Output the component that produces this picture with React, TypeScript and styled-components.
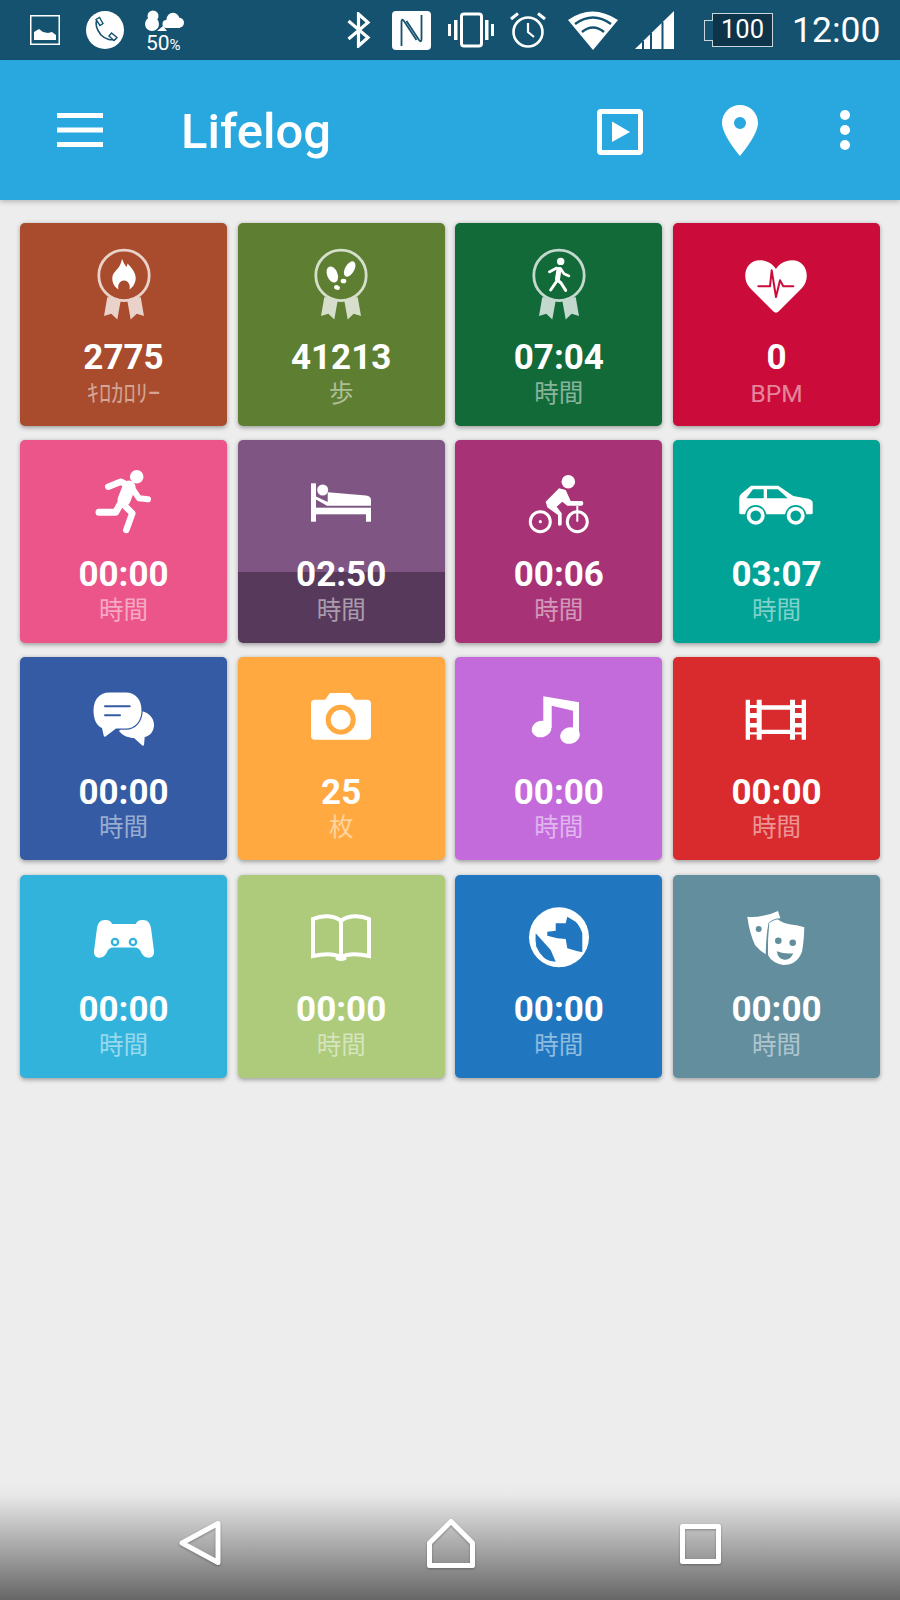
import React from 'react';
import styled, { createGlobalStyle } from 'styled-components';

const Global = createGlobalStyle`
  html, body { margin: 0; padding: 0; background: #ededed; }
  body { font-family: Roboto, "Noto Sans CJK JP", sans-serif; }
`;

const Page = styled.div`
  width: 900px;
  height: 1600px;
  display: flex;
  flex-direction: column;
  overflow: hidden;
  background: #ededed;
`;

const StatusBar = styled.div`
  height: 60px;
  flex: none;
  background: #14526f;
  display: flex;
  align-items: center;
`;

const StatusIcon = styled.svg<{ $ml: number }>`
  flex: none;
  display: block;
  margin-left: ${p => p.$ml}px;
  fill: #fff;
`;

const Stamina = styled.div`
  position: relative;
  flex: none;
  width: 42px;
  height: 60px;
  margin-left: 21px;
`;

const StaminaArt = styled.svg`
  display: block;
  fill: #fff;
`;

const StaminaText = styled.span`
  position: absolute;
  left: 1px;
  top: 32px;
  color: #fff;
  font: 400 21px/22px Roboto, sans-serif;
  white-space: nowrap;
  & small { font-size: 15px; }
`;

const Battery = styled.div`
  position: relative;
  flex: none;
  width: 61px;
  height: 34px;
  box-sizing: border-box;
  margin-left: 38px;
  border: 1.5px solid #c9d6dc;
  background: #0d3449;
  color: #fff;
  font: 400 25.5px/31px Roboto, sans-serif;
  text-align: center;
  &::before {
    content: '';
    position: absolute;
    left: -9px;
    top: 6px;
    width: 7.5px;
    height: 19px;
    border: 1.5px solid #c9d6dc;
    border-right: none;
    background: #14526f;
  }
`;

const Clock = styled.span`
  margin-left: 19px;
  color: #fff;
  font: 400 35.5px/60px Roboto, sans-serif;
  white-space: nowrap;
`;

const AppBar = styled.header`
  position: relative;
  flex: none;
  height: 140px;
  background: #29a8e0;
  box-shadow: 0 2px 5px rgba(0, 0, 0, 0.22);
  display: flex;
  align-items: center;
  padding: 0 50px 0 57px;
  box-sizing: border-box;
`;

const Title = styled.h1`
  margin: 4px 0 0 78px;
  color: #fff;
  font: 500 49px/60px Roboto, sans-serif;
  flex: 1;
`;

const ActionIcon = styled.svg<{ $ml?: number; $mt?: number }>`
  flex: none;
  display: block;
  fill: #fff;
  margin-left: ${p => p.$ml ?? 0}px;
  margin-top: ${p => p.$mt ?? 0}px;
`;

const Grid = styled.main`
  flex: 1;
  display: grid;
  grid-template-columns: repeat(4, 207px);
  grid-auto-rows: 203px;
  gap: 14.33px 10.67px;
  padding: 22.67px 20px 0;
  align-content: start;
`;

const Card = styled.section<{ $bg: string; $band?: string }>`
  border-radius: 5px;
  box-shadow: 0 1.5px 4px rgba(0, 0, 0, 0.32);
  background: ${p => p.$band ? `linear-gradient(${p.$bg} 65%, ${p.$band} 65%)` : p.$bg};
  display: flex;
  flex-direction: column;
  align-items: center;
  padding-top: 16px;
  box-sizing: border-box;
  color: #fff;
`;

const CardIcon = styled.svg`
  display: block;
  flex: none;
  width: 90px;
  height: 90px;
  fill: #fff;
`;

const Value = styled.div`
  margin-top: 9.5px;
  font: 700 35px/40px Roboto, sans-serif;
`;

const Unit = styled.div`
  margin-top: 0.5px;
  font: 400 24.5px/30px Roboto, "Noto Sans CJK JP", sans-serif;
  color: rgba(255, 255, 255, 0.5);
`;

const NavBar = styled.nav`
  flex: none;
  height: 120px;
  box-sizing: border-box;
  padding: 38px 0 0 179px;
  background: linear-gradient(#ededed 0%, #e9e9e9 12%, #666666 100%);
  display: flex;
  align-items: flex-start;
  gap: 205.5px;
`;

const NavIcon = styled.svg`
  display: block;
  flex: none;
  overflow: visible;
  fill: none;
  stroke: #fff;
  stroke-width: 5;
  stroke-linejoin: round;
  filter: drop-shadow(0 1px 1px rgba(0, 0, 0, 0.3));
`;

type IconProps = { bg: string };
const Ribbon = ({ glyph }: { glyph: React.ReactNode }) => (
  <CardIcon viewBox="0 0 90 90">
    <g opacity={0.75}>
      <circle cx={45} cy={36.4} r={25.2} fill="none" stroke="#fff" strokeWidth={2.8} />
      <polygon points="28.3,58 41.7,61.4 38.3,80.4 32.3,74.7 25,77" />
      <polygon points="61.7,58 48.3,61.4 51.7,80.4 57.7,74.7 65,77" />
    </g>
    {glyph}
  </CardIcon>
);

const Fire = () => (
  <Ribbon glyph={<path d="M43 19.7C44.5 24 46 26 47.5 28C48 26.5 48.5 25.5 48.5 24.5C53 29 56.7 34 56.7 39C56.7 45 53 49 50.5 50.4C51.5 47 50 41.5 45 41.5C40 41.5 38.5 47 39.5 50.4C36 48.5 33.3 44.5 33.3 39.5C33.3 33 39 31 41 26C42 24 42.5 22 43 19.7Z" />} />
);
const Steps = () => (
  <Ribbon glyph={<>
    <ellipse cx={36.3} cy={35.5} rx={5.2} ry={8.4} transform="rotate(-22 36.3 35.5)" />
    <ellipse cx={41} cy={48.5} rx={3} ry={2.3} transform="rotate(25 41 48.5)" />
    <ellipse cx={53.7} cy={30} rx={4.6} ry={8.4} transform="rotate(30 53.7 30)" />
    <ellipse cx={47.5} cy={42} rx={2.8} ry={2.3} />
  </>} />
);
const Walker = () => (
  <Ribbon glyph={<>
    <circle cx={46.7} cy={22.4} r={3.7} />
    <g fill="none" stroke="#fff" strokeLinecap="round" strokeLinejoin="round">
      <path strokeWidth={2.6} d="M35.3 33L42.7 29M46.7 29.7L50 34.7L55 37" />
      <path strokeWidth={5} d="M45 30.5L43.5 40" />
      <path strokeWidth={3} d="M43.5 41L36.7 51M43.5 41L47 44L51.7 51.4" />
    </g>
  </>} />
);
const Heart = ({ bg }: IconProps) => (
  <CardIcon viewBox="0 0 90 90">
    <path d="M42.5 72.5L19 49C10 39.5 14 21.3 29 21.3C36 21.3 42 25 45 30C48 25 54 21.3 61 21.3C76 21.3 80 39.5 71 49L47.5 72.5C46 74 44 74 42.5 72.5Z" />
    <path d="M27.3 47.3H39L40.7 31.3L45 58L49 41.3L52.3 47.3H62.3" fill="none" stroke={bg} strokeWidth={2} strokeLinecap="round" strokeLinejoin="round" />
  </CardIcon>
);
const Runner = () => (
  <CardIcon viewBox="0 0 90 90">
    <circle cx={57.7} cy={20.7} r={6.8} />
    <g fill="none" stroke="#fff" strokeLinecap="round" strokeLinejoin="round">
      <path strokeWidth={6.5} d="M29.3 30.7L41.7 25.7L48.3 29" />
      <path strokeWidth={13} d="M50 31L45 44" />
      <path strokeWidth={6} d="M53.3 32.3L60 42.3L69 43.3" />
      <path strokeWidth={7} d="M41.7 47.3L36.7 56.3H20" />
      <path strokeWidth={6.5} d="M43.3 47.3L53.3 57.3L47.3 74" />
    </g>
  </CardIcon>
);
const Bed = () => (
  <CardIcon viewBox="0 0 90 90">
    <rect x={15} y={27.3} width={5} height={38.4} />
    <circle cx={26.7} cy={34} r={5.5} />
    <path d="M31.7 36.3L70 39.5Q75 40 75 44V49.7H31L20 43.5V40.5L31.7 46Z" />
    <rect x={20} y={51.7} width={55} height={6.6} />
    <rect x={70} y={58} width={5} height={7.7} />
  </CardIcon>
);
const Bike = () => (
  <CardIcon viewBox="0 0 90 90">
    <circle cx={54.3} cy={25.7} r={6.8} />
    <path d="M31.7 45.7L45 32.3L51.7 34L56.7 45H67.5Q69.3 45 69.3 47.3T67.5 49.7H53.3L48.3 45.7L42.7 50.7L47.7 57.3V68Q47.7 69.7 45.8 69.7T44 68V59L33.3 51.3Z" />
    <g fill="none" stroke="#fff">
      <circle cx={26.3} cy={65.7} r={10} strokeWidth={3} />
      <circle cx={63.3} cy={65.7} r={10} strokeWidth={3} />
      <path d="M63.3 50V65.7" strokeWidth={2} />
    </g>
    <circle cx={26.3} cy={65.7} r={1.6} />
  </CardIcon>
);
const Car = ({ bg }: IconProps) => (
  <CardIcon viewBox="0 0 90 90">
    <path d="M20 29.7H47.3L62.3 40L77.3 42.8Q81.7 44 81.7 47V57Q81.7 58.3 80 58.3H10Q8.3 58.3 8.3 57V42Q8.3 40 10 38Z" />
    <path fill={bg} d="M15.3 42.3L22 33.3H32.7V42.3ZM36 33.3H47L56.7 42.3H36Z" />
    {[24.7, 64.7].map(x => (
      <g key={x}>
        <circle cx={x} cy={59.7} r={10.7} fill={bg} />
        <circle cx={x} cy={59.7} r={9} />
        <circle cx={x} cy={59.7} r={5.3} fill={bg} />
      </g>
    ))}
  </CardIcon>
);
const Chat = ({ bg }: IconProps) => (
  <CardIcon viewBox="0 0 90 90">
    <path d="M60 38C68 38 75 44 75 51.7C75 58 71 63 65.7 64L65 72C64.7 73 63.8 73 63 72.3L55 65C50 65 44 63 40 58Z" />
    <path stroke={bg} strokeWidth={2.4} paintOrder="stroke" d="M30 19.5H47C56 19.5 62.5 26 62.5 37.5C62.5 48 56 55.5 47 55.5H37L26.5 63.5C25.5 64 24.7 63.5 24.7 62.5L23 55C17.5 53 14.5 46 14.5 37.5C14.5 26 21 19.5 30 19.5Z" />
    <path d="M26 33.3H50.7M26 42.3H41" fill="none" stroke={bg} strokeWidth={2} strokeLinecap="round" />
  </CardIcon>
);
const Camera = ({ bg }: IconProps) => (
  <CardIcon viewBox="0 0 90 90">
    <path d="M34 20H54L59 26.7H71Q75 26.7 75 30.7V62.7Q75 66.7 71 66.7H19Q15 66.7 15 62.7V30.7Q15 26.7 19 26.7H29Z" />
    <circle cx={44.7} cy={46.7} r={15} fill={bg} />
    <circle cx={44.7} cy={46.7} r={10} />
  </CardIcon>
);
const Music = () => (
  <CardIcon viewBox="0 0 90 90">
    <path d="M29.3 23.3L65 29.3V60H59V37.7L37.7 32.7V55H29.3Z" />
    <ellipse cx={27.5} cy={56} rx={10} ry={8.2} transform="rotate(-15 27.5 56)" />
    <ellipse cx={56} cy={62.5} rx={10} ry={8.2} transform="rotate(-15 56 62.5)" />
  </CardIcon>
);
const Film = () => (
  <CardIcon viewBox="0 0 90 90">
    <path fillRule="evenodd" d="M14.7 26.7H19V32H25.7V26.7H30.7V32.3H59V26.7H64V32H70.7V26.7H75V66.7H70.7V61.5H64V66.7H59V61H30.7V66.7H25.7V61.5H19V66.7H14.7ZM19 35V40H25.7V35ZM19 45V50H25.7V45ZM19 54.5V59.3H25.7V54.5ZM64 35V40H70.7V35ZM64 45V50H70.7V45ZM64 54.5V59.3H70.7V54.5ZM30.7 36.7V56.7H59V36.7Z" />
  </CardIcon>
);
const Pad = ({ bg }: IconProps) => (
  <CardIcon viewBox="0 0 90 90">
    <path d="M26 29C30 29 32 30 33 33H57C58 30 60 29 64 29C69 29 71 32 72 37L75 60C75.5 64 73 66.7 70 66.7C66 66.7 64 65 62 61C61 58 59 56.5 55 56.5H35C31 56.5 29 58 28 61C26 65 24 66.7 20 66.7C17 66.7 14.5 64 15 60L18 37C19 32 21 29 26 29Z" />
    {[36, 54].map(x => (
      <g key={x}>
        <circle cx={x} cy={51} r={4.3} fill={bg} />
        <circle cx={x} cy={51} r={2} />
      </g>
    ))}
  </CardIcon>
);
const Book = () => (
  <CardIcon viewBox="0 0 90 90">
    <path fill="none" stroke="#fff" strokeWidth={4} d="M45 30C38 24 26 24 17 28V65C28 62.5 38 62.5 45 66C52 62.5 62 62.5 73 65V28C64 24 52 24 45 30V66" />
    <ellipse cx={45} cy={67.5} rx={5.5} ry={2.6} />
  </CardIcon>
);
const Globe = ({ bg }: IconProps) => (
  <CardIcon viewBox="0 0 90 90">
    <circle cx={45} cy={46.3} r={30} />
    <path fill={bg} d="M53.3 25.7L61.7 30.7Q66 35 68.3 42.3V61.3L62.7 60L53.3 57.3L51.7 48L43.3 47.3L33.3 44.7V40.7L41.7 39.7V32.3H51.7Z" />
    <path fill={bg} d="M21.7 42.3L36.7 59L41.7 70.7Q34 70 30 66.7Q25 62 22.3 55.7Q21 50 21.7 42.3Z" />
  </CardIcon>
);
const Masks = ({ bg }: IconProps) => (
  <CardIcon viewBox="0 0 90 90">
    <path d="M16.3 25.7Q24 26.5 32 24.7Q40 23.5 47 20L49.3 27.3Q42 27.5 37.5 32Q35 45 34.7 63.3Q29 60 24 54Q18.5 42 16.3 25.7Z" />
    <circle cx={27.7} cy={38} r={3} fill={bg} />
    <path d="M38.3 32Q44 28 47 28.5Q52 32.5 60 33.5Q67 34 73.3 36.3Q73 50 71 60.7Q66 74 52.3 74Q41 72 37 64Q36.5 48 38.3 32Z" />
    <circle cx={47.3} cy={49.7} r={3.3} fill={bg} />
    <circle cx={61.7} cy={51.7} r={3.3} fill={bg} />
    <path d="M45.7 60.2Q54 63.5 62.3 62.3Q59 70 52.5 68.5Q47 67.5 45.7 60.2Z" fill={bg} />
  </CardIcon>
);

const cards = [
  { bg: '#a94c2d', value: '2775', unit: 'ｷﾛｶﾛﾘｰ', Icon: Fire },
  { bg: '#5e7f31', value: '41213', unit: '歩', Icon: Steps },
  { bg: '#126a39', value: '07:04', unit: '時間', Icon: Walker },
  { bg: '#cb0c3a', value: '0', unit: 'BPM', Icon: Heart },
  { bg: '#ec558a', value: '00:00', unit: '時間', Icon: Runner },
  { bg: '#7f5683', band: '#573a5b', value: '02:50', unit: '時間', Icon: Bed },
  { bg: '#a73376', value: '00:06', unit: '時間', Icon: Bike },
  { bg: '#00a396', value: '03:07', unit: '時間', Icon: Car },
  { bg: '#345ba4', value: '00:00', unit: '時間', Icon: Chat },
  { bg: '#ffa940', value: '25', unit: '枚', Icon: Camera },
  { bg: '#c46bdc', value: '00:00', unit: '時間', Icon: Music },
  { bg: '#d92b2d', value: '00:00', unit: '時間', Icon: Film },
  { bg: '#32b3dc', value: '00:00', unit: '時間', Icon: Pad },
  { bg: '#adcb7b', value: '00:00', unit: '時間', Icon: Book },
  { bg: '#2077bf', value: '00:00', unit: '時間', Icon: Globe },
  { bg: '#628e9e', value: '00:00', unit: '時間', Icon: Masks },
];

const SB = '#14526f';

export default function App() {
  return (
    <Page>
      <Global />
      <StatusBar>
        <StatusIcon $ml={30} width={30} height={30} viewBox="0 0 30 30">
          <rect x={0.75} y={0.75} width={28.5} height={28.5} fill="none" stroke="#fff" strokeWidth={1.5} />
          <path d="M4 25V17L9 14L13 17L18 18L22 17L26 20V25Z" />
        </StatusIcon>
        <StatusIcon $ml={26} width={38} height={38} viewBox="0 0 38 38">
          <circle cx={19} cy={19} r={19} />
          <path d="M11 8C9 13 11 19 15 24C19 28 25 30 30 28" fill="none" stroke={SB} strokeWidth={1.6} />
          <path d="M10 8.5L13.5 6.5L17 12.5L14 14.5Z M23 25L25.5 22L31 26.5L28 29.5Z" fill="#fff" stroke={SB} strokeWidth={1.4} />
        </StatusIcon>
        <Stamina>
          <StaminaArt width={42} height={34} viewBox="0 0 42 34">
            <circle cx={8} cy={16} r={5.5} />
            <circle cx={7} cy={24} r={7} />
            <path d="M12 31H22L18 26Z" />
            <circle cx={28} cy={19.3} r={6.5} />
            <circle cx={34} cy={22.7} r={5} />
            <circle cx={21.5} cy={24} r={4} />
            <rect x={21} y={24} width={14} height={4} />
          </StaminaArt>
          <StaminaText>50<small>%</small></StaminaText>
        </Stamina>
        <StatusIcon $ml={160} width={24} height={36} viewBox="0 0 24 36">
          <path d="M1.5 9L21 25.5L11.5 34V2L21 10.5L1.5 27" fill="none" stroke="#fff" strokeWidth={3.2} strokeLinejoin="miter" />
        </StatusIcon>
        <StatusIcon $ml={21} width={39} height={39} viewBox="0 0 39 39">
          <rect width={39} height={39} rx={4} />
          <path d="M9.5 35V11Q9.5 7 12 10L24.5 29" fill="none" stroke={SB} strokeWidth={1.8} />
          <path d="M29.5 4V28Q29.5 32 27 29L14.5 10" fill="none" stroke={SB} strokeWidth={1.8} />
        </StatusIcon>
        <StatusIcon $ml={17} width={46} height={36} viewBox="0 0 46 36">
          <rect x={13.5} y={2} width={20} height={32} rx={2.5} fill="none" stroke="#fff" strokeWidth={3} />
          <rect x={0} y={12} width={3} height={12} />
          <rect x={6} y={8} width={3.5} height={20} />
          <rect x={37} y={8} width={3.5} height={20} />
          <rect x={43} y={12} width={3} height={12} />
        </StatusIcon>
        <StatusIcon $ml={16} width={36} height={38} viewBox="0 0 36 38">
          <circle cx={18} cy={21} r={14.5} fill="none" stroke="#fff" strokeWidth={2.6} />
          <path d="M18 12V21L24 26" fill="none" stroke="#fff" strokeWidth={2.2} />
          <path d="M1 8L8 2.5M35 8L28 2.5" fill="none" stroke="#fff" strokeWidth={3} />
        </StatusIcon>
        <StatusIcon $ml={22} width={50} height={42} viewBox="0 0 50 42">
          <path d="M25 41L0 11Q24 -6 50 11Z" />
          <path d="M7 15Q25 2 43 15M14 23Q25 14 36 23" fill="none" stroke={SB} strokeWidth={2.5} />
        </StatusIcon>
        <StatusIcon $ml={17} width={39} height={38} viewBox="0 0 39 38">
          <path d="M39 0V38H0Z" />
          <path d="M8 38V30M16 38V22M27.5 38V11" stroke={SB} strokeWidth={2} />
        </StatusIcon>
        <Battery>100</Battery>
        <Clock>12:00</Clock>
      </StatusBar>
      <AppBar>
        <ActionIcon width={46} height={34} viewBox="0 0 46 34">
          <rect y={0} width={46} height={5} />
          <rect y={14.5} width={46} height={5} />
          <rect y={29} width={46} height={5} />
        </ActionIcon>
        <Title>Lifelog</Title>
        <ActionIcon $mt={4} width={46} height={46} viewBox="0 0 46 46">
          <rect x={2.5} y={2.5} width={41} height={41} rx={1.5} fill="none" stroke="#fff" strokeWidth={5} />
          <path d="M15 12.5L33 23L15 33Z" />
        </ActionIcon>
        <ActionIcon $ml={79} width={36} height={51} viewBox="0 0 36 51">
          <path fillRule="evenodd" d="M18 0C8 0 0 8 0 18C0 30 18 51 18 51C18 51 36 30 36 18C36 8 28 0 18 0ZM18 12A6 6 0 1 1 18 24A6 6 0 1 1 18 12Z" />
        </ActionIcon>
        <ActionIcon $ml={82} width={10} height={40} viewBox="0 0 10 40">
          <circle cx={5} cy={5} r={5} />
          <circle cx={5} cy={20} r={5} />
          <circle cx={5} cy={35} r={5} />
        </ActionIcon>
      </AppBar>
      <Grid>
        {cards.map(({ bg, band, value, unit, Icon }, i) => (
          <Card key={i} $bg={bg} $band={band}>
            <Icon bg={bg} />
            <Value>{value}</Value>
            <Unit>{unit}</Unit>
          </Card>
        ))}
      </Grid>
      <NavBar>
        <NavIcon width={42} height={50} viewBox="0 0 42 50">
          <path d="M39 5.5V44.5L3 25Z" />
        </NavIcon>
        <NavIcon width={48} height={50} viewBox="0 0 48 50">
          <path d="M24 3.5L45.5 25V47.5H2.5V25Z" />
        </NavIcon>
        <NavIcon width={41} height={50} viewBox="0 0 41 50">
          <rect x={2.5} y={8.5} width={36} height={35} />
        </NavIcon>
      </NavBar>
    </Page>
  );
}
